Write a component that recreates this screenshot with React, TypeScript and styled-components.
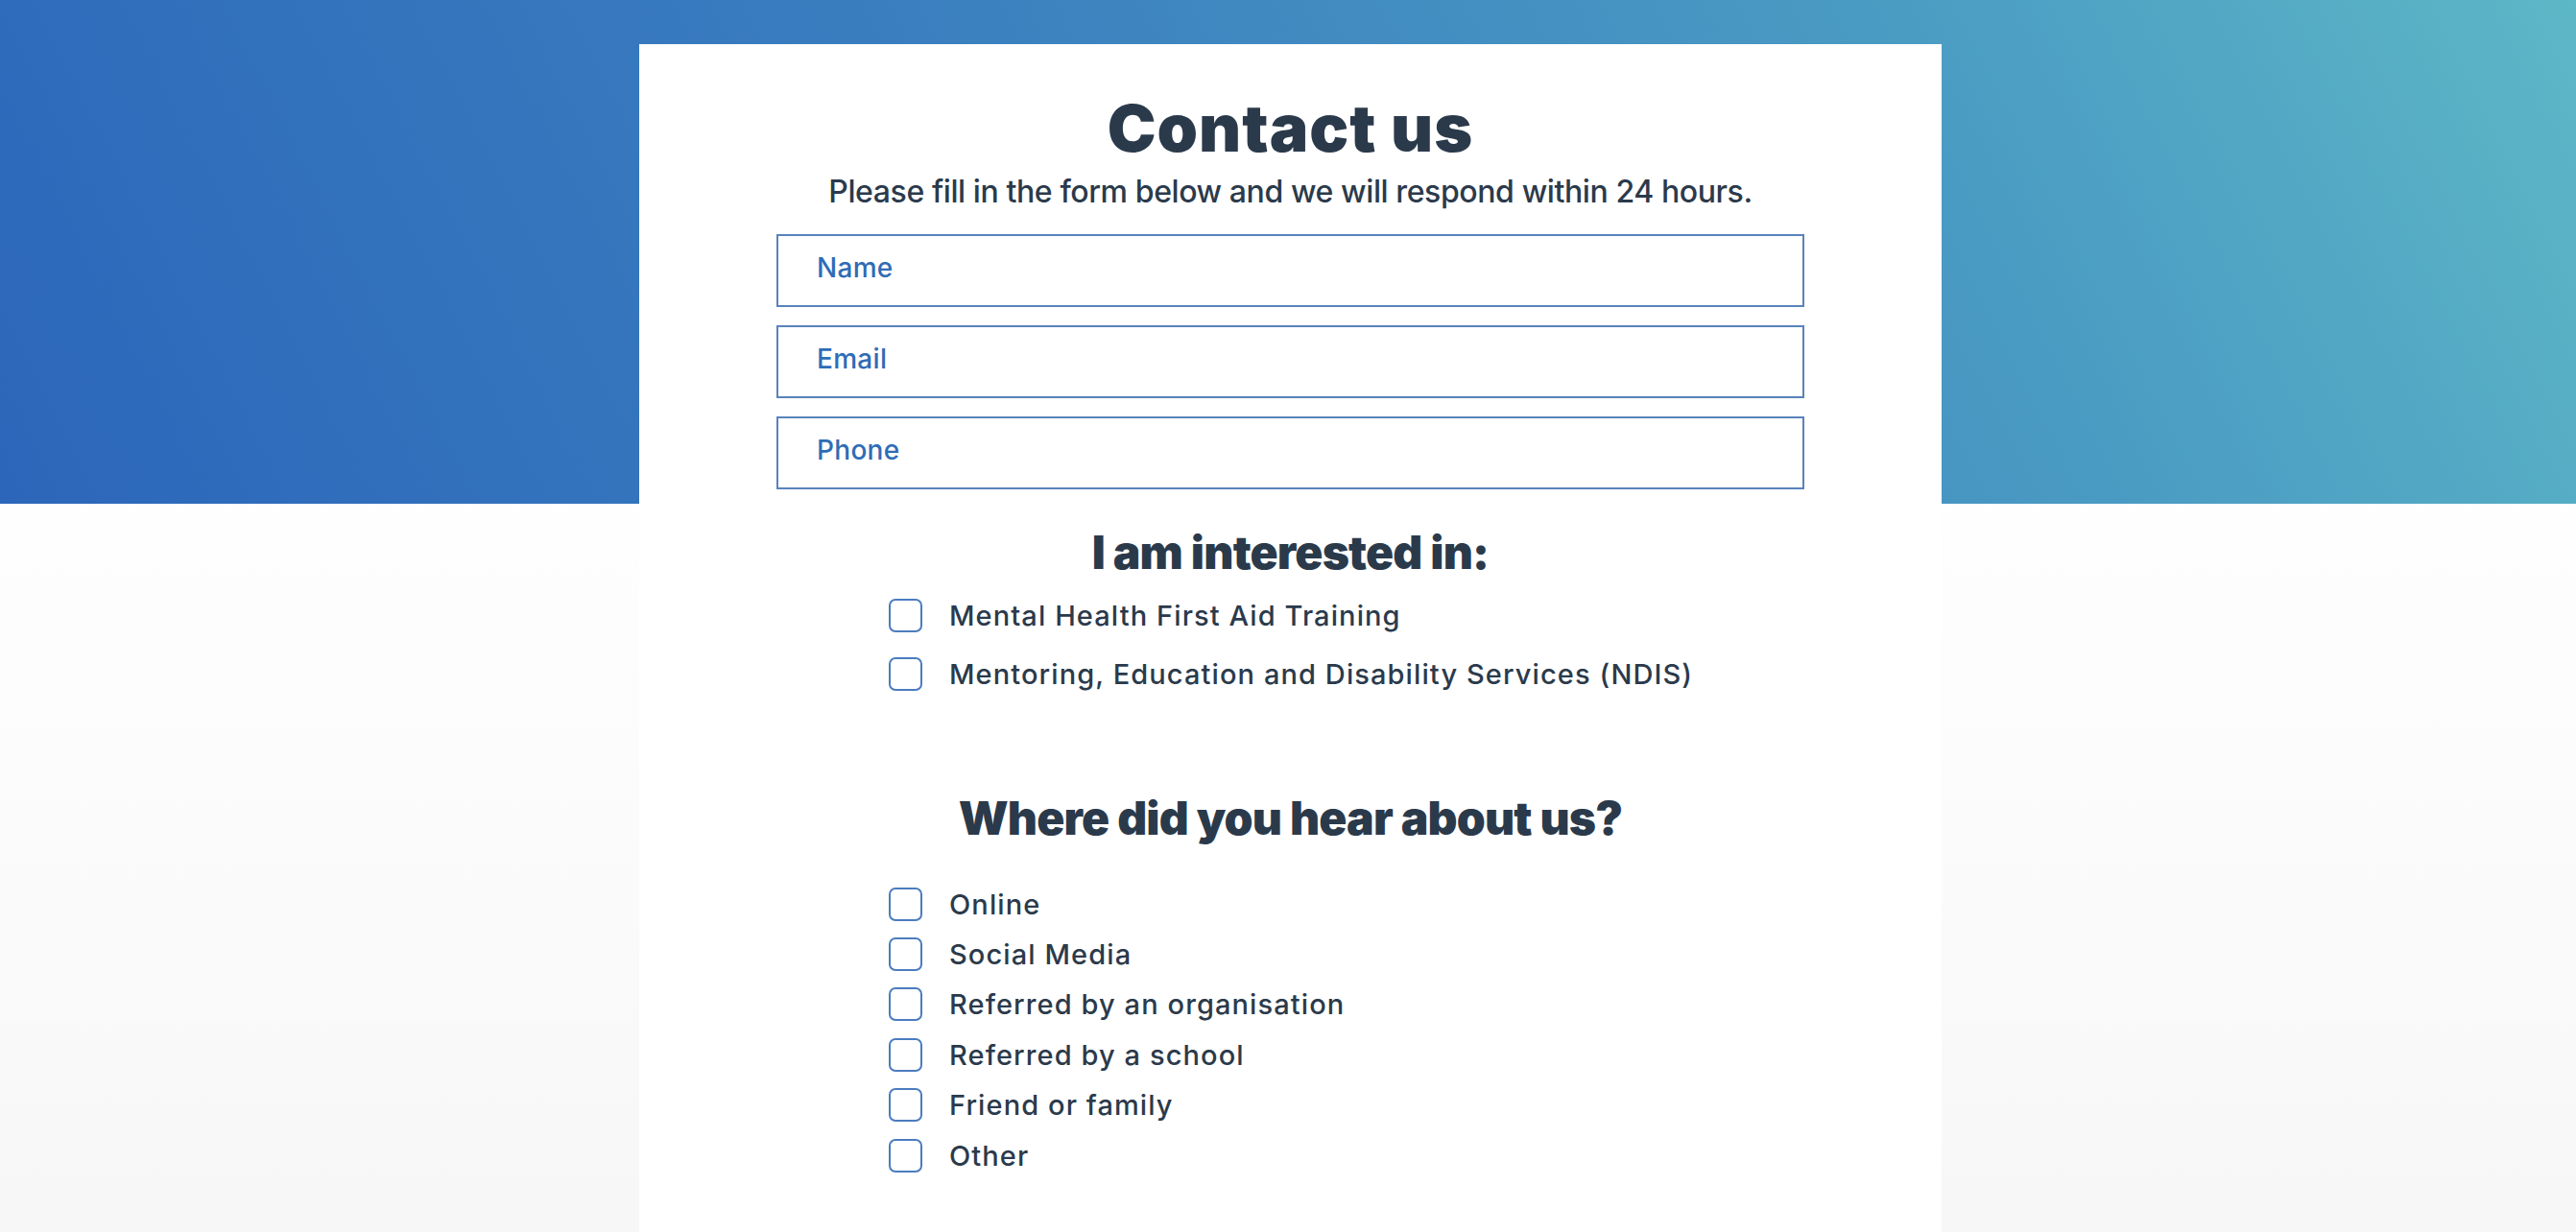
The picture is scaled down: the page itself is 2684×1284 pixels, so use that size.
import styled, { createGlobalStyle } from "styled-components";

const interests = [
  "Mental Health First Aid Training",
  "Mentoring, Education and Disability Services (NDIS)",
];

const sources = [
  "Online",
  "Social Media",
  "Referred by an organisation",
  "Referred by a school",
  "Friend or family",
  "Other",
];

const GlobalStyle = createGlobalStyle`
  * {
    box-sizing: border-box;
  }

  body {
    margin: 0;
    font-family: Inter, "Noto Sans", sans-serif;
    color: #2b3a4c;
  }
`;

export default function App() {
  return (
    <>
      <GlobalStyle />
      <Page>
        <Card>
          <Title>Contact us</Title>
          <SubTitle>
            Please fill in the form below and we will respond within 24 hours.
          </SubTitle>
          <Form onSubmit={e => e.preventDefault()}>
            <Field type='text' placeholder='Name' />
            <Field type='email' placeholder='Email' />
            <Field type='tel' placeholder='Phone' />

            <SectionTitle>I am interested in:</SectionTitle>
            <List>
              {interests.map(item => (
                <Option key={item} $height={61}>
                  <Box type='checkbox' />
                  <span>{item}</span>
                </Option>
              ))}
            </List>

            <SectionTitle $gap={92}>Where did you hear about us?</SectionTitle>
            <List $gap={35}>
              {sources.map(item => (
                <Option key={item} $height={52.4}>
                  <Box type='checkbox' />
                  <span>{item}</span>
                </Option>
              ))}
            </List>
          </Form>
        </Card>
      </Page>
    </>
  );
}

const Page = styled.main`
  min-height: 100vh;
  display: flex;
  flex-direction: column;
  align-items: center;
  padding: 46px 0 0 5px;
  background:
    linear-gradient(63deg, #2c66ba 0%, #3a7ebf 40%, #4a9bc3 75%, #5cb7c6 100%)
      top / 100% 525px no-repeat,
    linear-gradient(#ffffff 35%, #f7f7f7 100%);
`;

const Card = styled.section`
  flex: 1;
  width: 1357px;
  background: #ffffff;
  padding: 47px 0 40px;
  display: flex;
  flex-direction: column;
  align-items: center;
`;

const Title = styled.h1`
  margin: 0;
  font-size: 68px;
  line-height: 80px;
  font-weight: 900;
  letter-spacing: 1px;
  color: #2b3a4b;
`;

const SubTitle = styled.p`
  margin: 7px 0 0;
  font-size: 32px;
  line-height: 40px;
  font-weight: 500;
  letter-spacing: -0.4px;
  color: #2b3a4b;
`;

const Form = styled.form`
  width: 1071px;
  margin-top: 24px;
  display: flex;
  flex-direction: column;
  gap: 19px;
`;

const Field = styled.input`
  height: 76px;
  width: 100%;
  border: 2px solid #5883bb;
  border-radius: 0;
  padding: 0 40px 7px;
  font-family: inherit;
  font-size: 28px;
  font-weight: 500;
  letter-spacing: 0.3px;
  color: #2f6cb6;
  background: #ffffff;
  outline: none;

  &::placeholder {
    color: #2f6cb6;
    opacity: 1;
  }

  &:focus {
    border-color: #2f6cb6;
  }
`;

const SectionTitle = styled.h2<{ $gap?: number }>`
  margin: ${p => (p.$gap ?? 38) - 19}px 0 0;
  text-align: center;
  font-size: 48px;
  line-height: 56px;
  font-weight: 900;
  letter-spacing: -0.8px;
  color: #2b3a4b;
`;

const List = styled.div<{ $gap?: number }>`
  margin-top: ${p => (p.$gap ?? 7) - 19}px;
  padding-left: 117px;
  display: flex;
  flex-direction: column;
`;

const Option = styled.label<{ $height: number }>`
  height: ${p => p.$height}px;
  display: flex;
  align-items: center;
  gap: 28px;
  font-size: 29px;
  font-weight: 500;
  letter-spacing: 1.1px;
  color: #2b3a4b;
  cursor: pointer;
`;

const Box = styled.input`
  appearance: none;
  flex: none;
  width: 35px;
  height: 35px;
  margin: 0;
  border: 2px solid #4b7cbf;
  border-radius: 7px;
  background: #ffffff;
  cursor: pointer;

  &:checked {
    background: #2f6cb6;
    box-shadow: inset 0 0 0 5px #ffffff;
  }
`;
